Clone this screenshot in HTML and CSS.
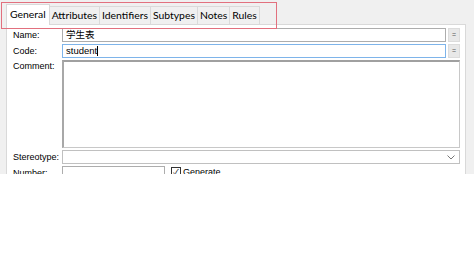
FILE: index.html
```html
<!DOCTYPE html>
<html lang="zh">
<head>
  <meta charset="UTF-8" />
  <title>Table Properties</title>
  <link rel="stylesheet" href="styles.css">
</head>
<body>

  <div class="dialog">
    <div class="tabs">
      <div class="tab active">General</div>
      <div class="tab">Attributes</div>
      <div class="tab">Identifiers</div>
      <div class="tab">Subtypes</div>
      <div class="tab">Notes</div>
      <div class="tab">Rules</div>
    </div>

    <div class="panel">
      <div class="row">
        <label class="label">Name:</label>
        <div class="field">学生表</div>
        <button class="eq-btn">=</button>
      </div>
      <div class="row">
        <label class="label">Code:</label>
        <div class="field focused">student<span class="caret"></span></div>
        <button class="eq-btn">=</button>
      </div>
      <div class="row row-comment">
        <label class="label">Comment:</label>
        <div class="textarea"></div>
      </div>
      <div class="row">
        <label class="label">Stereotype:</label>
        <div class="field combo">
          <svg class="chevron" width="8" height="5" viewBox="0 0 8 5">
            <path d="M0.5 0.5 L4 4 L7.5 0.5" fill="none" stroke="#777" stroke-width="1"/>
          </svg>
        </div>
      </div>
      <div class="row">
        <label class="label">Number:</label>
        <div class="field short"></div>
        <div class="check">
          <span class="box">✓</span>
          <span>Generate</span>
        </div>
      </div>
    </div>
  </div>

  <div class="highlight"></div>

</body>
</html>
```

FILE: styles.css
```css
body {
  margin: 0;
  padding: 0;
  background-color: #fff;
  font-family: Arial, "Liberation Sans", "Noto Sans CJK SC", sans-serif;
  font-size: 9px;
  color: #000;
  position: relative;
}

.dialog {
  height: 174px;
  overflow: hidden;
  background-color: #f0f0f0;
  padding: 4px 8px 0 6px;
  box-sizing: border-box;
}

.tabs {
  display: flex;
  align-items: flex-end;
  height: 20px;
}

.tab {
  font-family: Lato, "Noto Sans", sans-serif;
  font-size: 10.4px;
  height: 18px;
  line-height: 17px;
  padding: 0 2px;
  background-color: #f0f0f0;
  border: 1px solid #dadada;
  border-bottom: none;
  margin-left: -1px;
  box-sizing: border-box;
  color: #000;
}

.tab.active {
  height: 21px;
  line-height: 19px;
  background-color: #fff;
  border-color: #d9d9d9;
  margin-left: 0;
  padding: 0 3px;
  position: relative;
  z-index: 1;
  margin-bottom: -1px;
}

.panel {
  background-color: #fff;
  border: 1px solid #d9d9d9;
  height: 200px;
  padding: 3px 5px 0 5px;
  display: flex;
  flex-direction: column;
  gap: 2px;
}

.row {
  display: flex;
  align-items: flex-start;
  gap: 2px;
}

.label {
  width: 48px;
  flex-shrink: 0;
  line-height: 14px;
  padding-left: 1px;
  box-sizing: border-box;
}

.field {
  flex: 1;
  height: 14px;
  border: 1px solid #adadad;
  background-color: #fff;
  box-sizing: border-box;
  font-size: 9.5px;
  line-height: 12px;
  padding-left: 3px;
  display: flex;
  align-items: center;
}

.field.focused {
  border-color: #7eb4ea;
}

.caret {
  display: inline-block;
  width: 1px;
  height: 10px;
  background-color: #000;
}

.eq-btn {
  width: 12px;
  height: 14px;
  padding: 0;
  border: 1px solid #dcdcdc;
  background-color: #e8e8e8;
  color: #555;
  font-size: 7px;
  line-height: 10px;
  font-family: Arial, "Liberation Sans", sans-serif;
}

.row-comment .label {
  line-height: 12px;
}

.textarea {
  flex: 1;
  height: 88px;
  border: 1px solid #c8c8c8;
  border-top: 2px solid #a0a0a0;
  border-left: 2px solid #a8a8a8;
  box-sizing: border-box;
}

.field.combo {
  justify-content: flex-end;
  padding-right: 4px;
  border-color: #c0c0c0;
}

.field.short {
  flex: 0 0 103px;
  height: 10px;
}

.check {
  display: flex;
  align-items: flex-start;
  gap: 2px;
  margin-left: 4px;
  height: 8px;
  overflow: hidden;
  padding-top: 1px;
}

.box {
  display: inline-block;
  width: 8px;
  height: 8px;
  border: 1px solid #333;
  font-size: 8px;
  line-height: 9px;
  text-align: center;
}

.highlight {
  position: absolute;
  left: 1px;
  top: 2px;
  width: 276px;
  height: 27px;
  border: 1px solid #e2707e;
  box-sizing: border-box;
  pointer-events: none;
}
```
